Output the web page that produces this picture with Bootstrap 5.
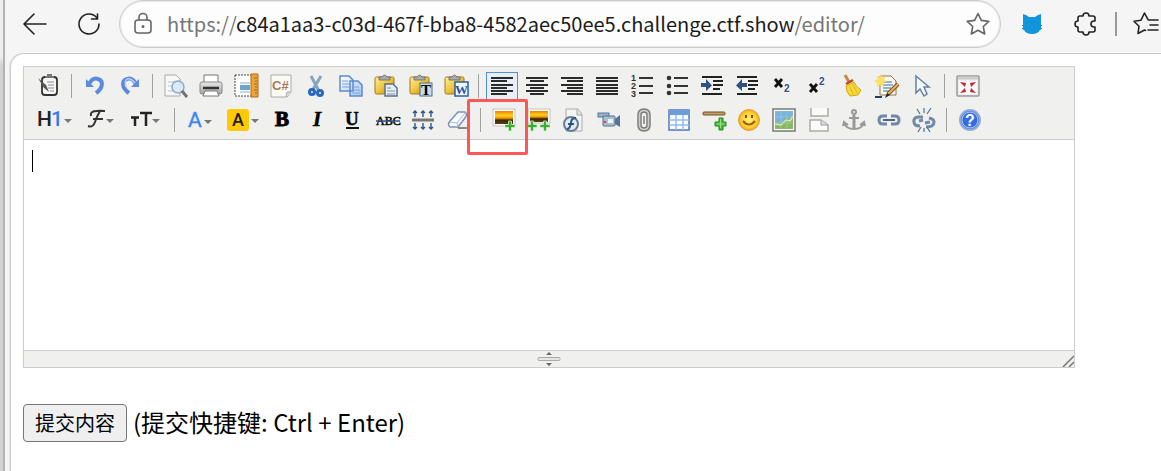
<!DOCTYPE html>
<html lang="zh-CN">
<head>
<meta charset="utf-8">
<meta name="viewport" content="width=device-width, initial-scale=1">
<title>Editor</title>
<link href="https://cdn.jsdelivr.net/npm/bootstrap@5.3.0/dist/css/bootstrap.min.css" rel="stylesheet">
<style>
body{background:#f5f5f5;font-family:"Noto Sans CJK SC",sans-serif;color:#000;overflow:hidden}
.window-edge{width:5px;background:linear-gradient(#eee 0 56px,#d2d2d2 66px);border-right:2px solid #b3b3b3}
.browser-bar{height:48px;padding-left:15px}
.browser-bar button{width:30px;height:48px;padding:0;border:0;background:none;flex:none}
.browser-bar svg,.tool svg{display:block;margin:auto;overflow:visible}
.browser-bar svg{fill:none;stroke:#222;stroke-width:1.6;stroke-linecap:round;stroke-linejoin:round}
.address{height:48px;margin-left:15px;margin-right:-2px;border:1px solid #ccc;box-shadow:inset 0 0 0 1px #e6e6e6;border-radius:24px;background:#fdfdfd;padding:0 7px 0 8px}
.address svg{stroke:#666}
.url{font:20px/46px "Noto Sans CJK SC",sans-serif;color:#767676;margin-left:9px;white-space:nowrap;overflow:hidden}
.url b{font-weight:400;color:#1b1b1b}
.bar-split{width:2px;height:24px;background:#999}
.bar-end{margin-left:14px}
.browser-page{margin:5px 0 0 5px;border:1px solid #ccc;border-right:0;border-bottom:0;border-radius:14px 0 0 0;background:#fff;padding:12px 86px 24px 12px;box-shadow:-1px 0 #e4e4e4}
.editor{border:1px solid #ccc}
.toolbar{background:#f0f0ee;border-bottom:1px solid #ccc;padding:5px 9px;gap:6px}
.tool-row{gap:3px}
.tool{width:32px;height:28px;padding:0;border:0;background:none;flex:none}
.tool.chosen{border:1px solid #5690d2;background:#e9eff6}
.tool-menu{width:43px}.tool-color{width:38px}.tool-mark{width:41px}
.lines{stroke:#2b2b2b;stroke-width:2}
.split{width:8px;height:24px;flex:none}
.split::before{content:"";display:block;width:1px;height:24px;margin-left:3px;background:#a0a0a0}
.highlight-box{left:-21px;top:-7px;width:61px;height:56px;border:3px solid #fc5858;border-radius:2px;pointer-events:none;z-index:2}
.edit-text{display:block;height:210px;border:0;resize:none;outline:0;padding:8px;background:#fff}
.caret{left:8px;top:10px;width:1px;height:22px;background:#000}
.statusbar{height:17px;background:#f0f0ee;border-top:1px solid #ccc}
.corner{right:0;bottom:0}
.submit{height:38px;padding:0 11px;border:1px solid #767676;border-radius:4px;background:#efefef;font-size:20px;line-height:36px;color:#000}
.submit-row{margin-top:36px;gap:6px;font-size:24px;line-height:36px}
</style>
</head>
<body>
<svg width="0" height="0" class="position-absolute" aria-hidden="true">
<defs>
<linearGradient id="sunset" x2="0" y2="1"><stop stop-color="#ee8100"/><stop offset=".35" stop-color="#ffd21e"/><stop offset=".55" stop-color="#f09a00"/><stop offset=".7" stop-color="#3c260a"/><stop offset="1" stop-color="#5a3f12"/></linearGradient>
<linearGradient id="gold" x2="1" y2="1"><stop stop-color="#fff0a0"/><stop offset=".5" stop-color="#efc53c"/><stop offset="1" stop-color="#b67d12"/></linearGradient>
<linearGradient id="silver" x2="0" y2="1"><stop stop-color="#e8e8e8"/><stop offset="1" stop-color="#a5a5a5"/></linearGradient>
<linearGradient id="azure" x2="1" y2="1"><stop stop-color="#fff"/><stop offset="1" stop-color="#a4c4ee"/></linearGradient>
<radialGradient id="smile"><stop stop-color="#fff27c"/><stop offset=".7" stop-color="#ffd22e"/><stop offset="1" stop-color="#eda522"/></radialGradient>
<path id="plus" d="M3.500 0h3v3.500H10v3H6.500V10h-3V6.500H0v-3h3.500z" fill="#3dac32" stroke="#dff3d9" stroke-width=".7"/>
<path id="down" d="M0 0h8L4 4z" fill="#777"/>
<g id="clipboard"><rect x="1" y="3" width="19" height="17" rx="1.500" fill="url(#gold)" stroke="#a17722"/><path d="M5 6V3h3q2.500-4 5 0h3v3z" fill="#aaa" stroke="#666" stroke-width=".8"/></g>
</defs>
</svg>
<div class="d-flex min-vh-100">
<div class="window-edge flex-shrink-0"></div>
<div class="d-flex flex-column flex-grow-1 overflow-hidden">
<header class="browser-bar d-flex align-items-center">
<button aria-label="Back"><svg width="24" height="24"><path d="M23 12H1M11 2 1 12l10 10"/></svg></button>
<button class="ms-4" aria-label="Reload"><svg width="24" height="24"><path d="M20 6a10 10 0 1 0 2 6M20.500 2v5h-6"/></svg></button>
<div class="address d-flex align-items-center flex-grow-1 overflow-hidden">
<button aria-label="Site information"><svg width="20" height="22"><rect x="2" y="7" width="16" height="13" rx="3"/><path d="M6 7V4.500a4 4 0 0 1 8 0V7"/><circle cx="10" cy="13.500" r=".7" fill="#666"/></svg></button>
<div class="url flex-grow-1">https://<b>c84a1aa3-c03d-467f-bba8-4582aec50ee5.challenge.ctf.show</b>/editor/</div>
<button aria-label="Favourite"><svg width="24" height="24"><path d="m12 1.500 3.300 6.900 7.500 1-5.500 5.100 1.400 7.500-6.700-3.700L5.300 22l1.400-7.500-5.500-5.100 7.500-1z"/></svg></button>
</div>
<button class="ms-3 ps-1" aria-label="Extension"><svg width="22" height="22"><path d="M2 1q4 1 6 3h6q2-2 6-3v11h1v1h-1v2h1v1l-2 1q-2 4-8 4t-8-4l-2-1v-1h1v-2H1v-1h1z" fill="#1296db" stroke="none"/></svg></button>
<button class="ms-4 ps-1" aria-label="Extensions"><svg width="24" height="24"><path d="M6 4h3q0-3 3-3t3 3h4q2 0 2 2v3h-1q-3 0-3 3t3 3h1v3q0 2-2 2h-4q0 3-3 3t-3-3H6q-2 0-2-2v-3q-3 0-3-3t3-3V6q0-2 2-2z"/></svg></button>
<div class="bar-split ms-3"></div>
<button class="bar-end" aria-label="Favourites"><svg width="26" height="24"><path d="m16 8-1-.3L11.500 1 8 8.200l-7 1 5 5-1 7.300 6.500-3.500 1 .5M16 8h9M17 13h8M15 18h10"/></svg></button>
</header>
<main class="browser-page flex-grow-1">
<div class="editor">
<div class="toolbar d-flex flex-column" role="toolbar">
<div class="tool-row d-flex align-items-center">
<button class="tool" aria-label="Source"><svg width="24" height="24"><rect x="5" y="3" width="15" height="18" rx="3" fill="#f6f6f2" stroke="#333" stroke-width="1.800"/><path d="M8 4V2h2V0h5v2h2v2z" fill="#777"/><path d="M10 8h7M11 11h6M11 14h6M13 17h4" stroke="#889"/><path d="m1 4 8 7 3 7-5-4z" fill="#555"/></svg></button>
<div class="split"></div>
<button class="tool" aria-label="Undo"><svg width="24" height="24"><path d="M6 10q4-7 9-5c6 2 5 9-2 14" fill="none" stroke="#5b8ade" stroke-width="4"/><path d="M3 5v8h8z" fill="#5b8ade"/></svg></button>
<button class="tool" aria-label="Redo"><svg width="24" height="24"><path d="M18 10q-4-7-9-5c-6 2-5 9 2 14" fill="none" stroke="#5b8ade" stroke-width="4"/><path d="M21 5v8h-8z" fill="#5b8ade"/><path d="M17 9q-4-5-8-4-3 2-1 8" fill="none" stroke="#b9d0f6" stroke-width="1.500"/></svg></button>
<div class="split"></div>
<button class="tool" aria-label="Preview"><svg width="24" height="24"><path d="M1 1h11l4 4v17H1z" fill="#f8f8f7" stroke="#aaa"/><path d="M4 8h7M4 12h5M4 17h8" stroke="#adc4d8"/><circle cx="14" cy="13" r="6" fill="#d7e9fa" fill-opacity=".9" stroke="#8babc9" stroke-width="1.500"/><path d="m18 17 5 6" stroke="#747171" stroke-width="3"/></svg></button>
<button class="tool" aria-label="Print"><svg width="24" height="24"><path d="M5 9V1h14v8" fill="#fff" stroke="#777"/><rect x="1" y="8" width="22" height="12" rx="2" fill="url(#silver)" stroke="#888"/><path d="M4 14h16" stroke="#333" stroke-width="2.500"/><path d="M6 17h12l2 5H4z" fill="#fff" stroke="#777"/></svg></button>
<button class="tool" aria-label="Template"><svg width="24" height="24"><path d="M1 1h19v21H1z" fill="#fff" stroke="#444" stroke-dasharray="2 1"/><path d="M6 9h10M6 18h10" stroke="#c1d7e7" stroke-width="2"/><path d="M6 11h10v5H6z" fill="#6aa5d2"/><path d="M17 0h7v23h-7z" fill="#eba637" stroke="#b6690c"/><path d="M20 4h3M21 7h2M20 10h3M21 13h2M20 16h3M21 19h2" stroke="#a0691e"/></svg></button>
<button class="tool" aria-label="Code"><svg width="24" height="24"><path d="M2 1h20v17l-4 5H2z" fill="#fafaf7" stroke="#aaa"/><path d="m17 23 1-5h4" fill="#ddd" stroke="#aaa"/><text x="3" y="16" font-family="Liberation Sans" font-weight="700" font-size="13" fill="#a87a52">C#</text></svg></button>
<button class="tool" aria-label="Cut"><svg width="24" height="24"><path d="m7 2 8 15M17 2 8 17" stroke="#88a3bb" stroke-width="3"/><g fill="none" stroke="#2867bd" stroke-width="3"><circle cx="8" cy="18" r="2.500"/><circle cx="16" cy="19" r="2.500"/></g></svg></button>
<button class="tool" aria-label="Copy"><svg width="24" height="24"><path d="M1 2h9l4 4v11H1zM11 7h8l4 4v11H11z" fill="url(#azure)" stroke="#5d89cb" stroke-width="1.500"/><path d="M3 7h6M3 10h7M3 13h7M13 13h7M13 16h8M13 19h8" stroke="#79a4df"/></svg></button>
<button class="tool" aria-label="Paste"><svg width="24" height="24"><use href="#clipboard"/><path d="M11 10h8l4 4v8H11z" fill="#e7edf1" stroke="#58738d" stroke-width="1.500"/><path d="M13 14h4M13 17h8M13 20h8" stroke="#7d99b4"/></svg></button>
<button class="tool" aria-label="Paste text"><svg width="24" height="24"><use href="#clipboard"/><rect x="11" y="9" width="12" height="13" fill="#c7dceb" stroke="#536c82"/><text x="12" y="21" font-family="Liberation Serif" font-weight="700" font-size="15">T</text></svg></button>
<button class="tool" aria-label="Paste from Word"><svg width="24" height="24"><use href="#clipboard"/><rect x="11" y="8" width="13" height="14" fill="#f5f9ff" stroke="#285dab" stroke-width="1.500"/><text x="11" y="20" font-family="Liberation Serif" font-weight="700" font-size="13" fill="#2057a7">W</text></svg></button>
<div class="split"></div>
<button class="tool chosen" aria-label="Align left"><svg class="lines" width="24" height="24"><path d="M1 4h22M1 7h16M1 11h22M1 14h16M1 17h22M1 20h16"/></svg></button>
<button class="tool" aria-label="Align center"><svg class="lines" width="24" height="24"><path d="M1 4h22M5 7h14M1 11h22M5 14h14M1 17h22M5 20h14"/></svg></button>
<button class="tool" aria-label="Align right"><svg class="lines" width="24" height="24"><path d="M1 4h22M7 7h16M1 11h22M7 14h16M1 17h22M7 20h16"/></svg></button>
<button class="tool" aria-label="Justify"><svg class="lines" width="24" height="24"><path d="M1 4h22M1 7h22M1 11h22M1 14h22M1 17h22M1 20h22"/></svg></button>
<button class="tool" aria-label="Numbered list"><svg width="24" height="24"><path d="M9 4h14M9 12h14M9 19h14" stroke="#333" stroke-width="2"/><g font-family="Liberation Sans" font-weight="700" font-size="9" fill="#333"><text x="1" y="7">1</text><text x="1" y="15">2</text><text x="1" y="23">3</text></g></svg></button>
<button class="tool" aria-label="Bulleted list"><svg width="24" height="24"><path d="M9 4h14M9 12h14M9 19h14" stroke="#333" stroke-width="2"/><g fill="#333"><circle cx="4" cy="4" r="2.300"/><circle cx="4" cy="12" r="2.300"/><circle cx="4" cy="19" r="2.300"/></g></svg></button>
<button class="tool" aria-label="Indent"><svg width="24" height="24"><path d="M2 3h20M13 7h10M13 11h10M13 15h7M2 20h20" stroke="#222" stroke-width="2"/><path d="M1 9h5V5l6 6.500L6 17v-4H1z" fill="#315384"/></svg></button>
<button class="tool" aria-label="Outdent"><svg width="24" height="24"><path d="M2 3h20M13 7h10M13 11h10M13 15h7M2 20h20" stroke="#222" stroke-width="2"/><path d="M12 9H7V5l-6 6.500L7 17v-4h5z" fill="#315384"/></svg></button>
<button class="tool" aria-label="Subscript"><svg width="24" height="24"><path d="m5 5 7 8m0-8-7 8" stroke="#111" stroke-width="2.800"/><text x="14" y="18" font-family="Liberation Sans" font-weight="700" font-size="10" fill="#315384">2</text></svg></button>
<button class="tool" aria-label="Superscript"><svg width="24" height="24"><path d="m5 10 7 8m0-8-7 8" stroke="#111" stroke-width="2.800"/><text x="14" y="11" font-family="Liberation Sans" font-weight="700" font-size="10" fill="#315384">2</text></svg></button>
<button class="tool" aria-label="Clear formatting"><svg width="24" height="24"><path d="m5 1 4 7" stroke="#c08a45" stroke-width="3"/><path d="m6 12 8-4q2 5 7 8l-3 5-8 1q-4-4-4-10z" fill="#f5d638" stroke="#d3aa1c"/><path d="m6 10 7-4" stroke="#b84924" stroke-width="2.500"/><path d="m10 13 3 7m0-10 4 9" stroke="#e2b920"/></svg></button>
<button class="tool" aria-label="Quick format"><svg width="24" height="24"><path d="M5 2h11l5 5v14H5z" fill="#fbfaf2" stroke="#8c764d"/><path d="M8 8h9M8 11h10M8 14h8M8 17h7" stroke="#749bc5" stroke-width="1.500"/><path d="m6 0 1 4 4-2-2 4 3 1-4 2 1 4-4-2-3 2V9L-1 7l4-2-2-3 4 1z" fill="#ffdf62"/><path d="m13 20 10-10" stroke="#805222" stroke-width="4"/><path d="m13 20 10-10" stroke="#edb455" stroke-width="2"/><path d="M0 23h7" stroke="#233d68" stroke-width="2"/><path d="m10 24 2-5 3 2z" fill="#222"/></svg></button>
<button class="tool" aria-label="Select all"><svg width="24" height="24"><path d="M6 2v17l4-4 4 7 3-2-3-7h5z" fill="#f4f8fc" stroke="#6580a1" stroke-width="1.500"/></svg></button>
<div class="split"></div>
<button class="tool" aria-label="Fullscreen"><svg width="24" height="24"><rect x="1" y="2" width="22" height="20" rx="1" fill="#eee" stroke="#999" stroke-width="1.500"/><path d="M2 4h20" stroke="#ccc" stroke-width="3"/><path d="M3 7h18v13H3z" fill="#fafafa"/><path d="m4 8 6 1-1 4zM20 8l-6 1 1 4zM4 19l6-1-1-4zM20 19l-6-1 1-4z" fill="#c32530"/></svg></button>
</div>
<div class="tool-row d-flex align-items-center">
<button class="tool tool-menu" aria-label="Heading"><svg width="35" height="24"><text x="0" y="18" font-family="Roboto" font-weight="500" font-size="21" fill="#222">H</text><text x="14" y="18" font-family="Roboto" font-weight="500" font-size="21" fill="#3b78e7">1</text><use href="#down" x="27" y="11"/></svg></button>
<button class="tool tool-menu" aria-label="Font"><svg width="35" height="24"><path d="M8 5Q11 2 22 3M17 3q-3 5-5 11-2 6-7 4M10 11h10M12 3Q7 4 8 8" fill="none" stroke="#333" stroke-width="2"/><use href="#down" x="23" y="11"/></svg></button>
<button class="tool tool-menu" aria-label="Font size"><svg width="35" height="24"><path d="M2 9.500h8M6 9v9M11 5h12M17 4v14" fill="none" stroke="#222" stroke-width="2.500"/><use href="#down" x="23" y="11"/></svg></button>
<div class="split"></div>
<button class="tool tool-color" aria-label="Text color"><svg width="30" height="24"><text x="2" y="19" font-family="Roboto" font-size="21" fill="#3f83f8" stroke="#3f83f8" stroke-width=".4">A</text><use href="#down" x="18" y="12"/></svg></button>
<button class="tool tool-mark" aria-label="Highlight color"><svg width="33" height="24"><rect width="22" height="22" x="0" y="1" rx="3" fill="#ffca05"/><text x="5" y="18" font-family="Roboto" font-weight="500" font-size="18" fill="#222">A</text><use href="#down" x="24" y="11"/></svg></button>
<button class="tool" aria-label="Bold"><svg width="24" height="24"><text x="4" y="18" font-family="Liberation Serif" font-weight="700" font-size="21" stroke="#000" stroke-width="1">B</text></svg></button>
<button class="tool" aria-label="Italic"><svg width="24" height="24"><text x="7" y="18" font-family="Liberation Serif" font-style="italic" font-weight="700" font-size="21" stroke="#000" stroke-width=".5">I</text></svg></button>
<button class="tool" aria-label="Underline"><svg width="24" height="24"><text x="4" y="17" font-family="Liberation Serif" font-weight="700" font-size="19" stroke="#000" stroke-width=".5">U</text><path d="M5 20h13" stroke="#111" stroke-width="2"/></svg></button>
<button class="tool" aria-label="Strikethrough"><svg width="24" height="24"><text x="0" y="17" font-family="Liberation Serif" font-size="12" stroke="#111" stroke-width=".6">ABC</text><path d="M0 13h24" stroke="#315384" stroke-width="1.500"/></svg></button>
<button class="tool" aria-label="Line height"><svg width="24" height="24"><path d="M1 12h22" stroke="#777" stroke-width="3"/><path d="M4 9V3m8 6V3m8 6V3M4 15v6m8-6v6m8-6v6M2 5l2-2 2 2m4 0 2-2 2 2m4 0 2-2 2 2M2 19l2 2 2-2m4 0 2 2 2-2m4 0 2 2 2-2" fill="none" stroke="#315384" stroke-width="1.400"/></svg></button>
<button class="tool" aria-label="Remove format"><svg width="24" height="24"><path d="M12 4h7q3 2 0 6l-7 9H4q-3-2 0-6z" fill="#f6f8fc" stroke="#7893b9" stroke-width="1.500"/><path d="m4 14 7 1 8-10m-8 10 1 4" fill="none" stroke="#adc0da"/><path d="M12 20h10" stroke="#222"/></svg></button>
<div class="split"></div>
<div class="position-relative">
<button class="tool d-block" aria-label="Image"><svg width="24" height="24"><rect x="1" y="1" width="22" height="17" fill="#fff" stroke="#c3c3c3"/><path d="M3 3h18v13H3z" fill="url(#sunset)"/><use href="#plus" x="13" y="13"/></svg></button>
<div class="highlight-box position-absolute"></div>
</div>
<button class="tool" aria-label="Multiple images"><svg width="24" height="24"><rect x="1" y="1" width="22" height="14" fill="#fff" stroke="#c3c3c3"/><path d="M3 3h18v11H3z" fill="url(#sunset)"/><use href="#plus" x="0" y="13"/><use href="#plus" x="13" y="13"/></svg></button>
<button class="tool" aria-label="Flash"><svg width="24" height="24"><path d="M4 1h12l4 5v17H4z" fill="#f4f4f4" stroke="#aaa"/><path d="M15 1v6h5" fill="#ddd" stroke="#aaa"/><circle cx="9" cy="16" r="7" fill="#e1ebf4" stroke="#667e94" stroke-width="2"/><path d="M14 10q-5 0-5 5-1 6-4 6M6 16h6" fill="none" stroke="#2b557c" stroke-width="2"/></svg></button>
<button class="tool" aria-label="Media"><svg width="24" height="24"><rect x="1" y="5" width="11" height="4" fill="#9bb4ce" stroke="#587797"/><rect x="6" y="8" width="12" height="10" rx="1" fill="#a9c1d8" stroke="#53708b"/><path d="m18 11 5-4v12l-5-3z" fill="#557493"/><circle cx="8" cy="14" r="1.300" fill="#e54935"/><path d="M11 13h5" stroke="#eef5ff" stroke-width="4"/></svg></button>
<button class="tool" aria-label="Attachment"><svg width="24" height="24"><path d="M7.500 6v11q0 5 4.500 5t4.500-5V7q0-5-4.500-5T7.500 7" fill="none" stroke="#ccc" stroke-width="2"/><path d="M9 7v10q0 3 3 3t3-3V7q0-3-3-3T9 7M12 8v8M6 8v9q0 6 6 6t6-6V7q0-6-6-6T6 7v10" fill="none" stroke="#777" stroke-width="1.400"/></svg></button>
<button class="tool" aria-label="Table"><svg width="24" height="24"><rect x="2" y="2" width="20" height="20" fill="#f7fbff" stroke="#4e79b9" stroke-width="1.500"/><path d="M2 2h20v5H2z" fill="#6d9cdb"/><path d="M9 7v15m7-15v15M2 12h20M2 17h20" stroke="#9bbce7" stroke-width="1.500"/></svg></button>
<button class="tool" aria-label="Horizontal rule"><svg width="24" height="24"><rect x="1" y="4" width="22" height="3" rx="1" fill="#c59d67" stroke="#735126"/><path d="M17 10h4v4h3v4h-3v4h-4v-4h-4v-4h4z" fill="#48bd3a" stroke="#25861e"/><path d="M18.500 11v9m-4-4h8" stroke="#92e37f"/></svg></button>
<button class="tool" aria-label="Emoticons"><svg width="24" height="24"><circle cx="12" cy="12" r="10.500" fill="url(#smile)" stroke="#e2a437"/><path d="M9 7v3m6-3v3" stroke="#7b4e11" stroke-width="2"/><path d="M6 13q6 7 12 0" fill="none" stroke="#a55c18" stroke-width="2"/></svg></button>
<button class="tool" aria-label="Map"><svg width="24" height="24"><rect x="1" y="1" width="22" height="22" fill="#fff" stroke="#777" stroke-width="1.500"/><path d="M3 3h18v18H3z" fill="#79b4e0"/><path d="m3 14 6 1 5-5 4 1 3-5v15H3z" fill="#87b85a"/><path d="m3 16 6 1 5-5 4 1 3-5" fill="none" stroke="#d7e9bd" stroke-width="1.500"/><path d="M9 3v18m6-18v18M3 9h18M3 15h18" stroke="#a5c7cb" stroke-width=".7"/></svg></button>
<button class="tool" aria-label="Page break"><svg width="24" height="24"><path d="M4 0v8h17V0M3 23V12h11l7 5v6z" fill="#fafafa" stroke="#aaa" stroke-width="1.500"/><path d="M14 12v5h7" fill="#ddd" stroke="#999"/></svg></button>
<button class="tool" aria-label="Anchor"><svg width="24" height="24"><g fill="none" stroke="#999" stroke-width="2"><circle cx="12" cy="4" r="2"/><path d="M7 10h10M2 15q2 6 10 6t10-6M1 18l1-4 4 3m17 1-1-4-4 3"/><path d="M12 7v14" stroke-width="3"/></g></svg></button>
<button class="tool" aria-label="Link"><svg width="24" height="24"><g fill="none" stroke="#6f89a7" stroke-width="3"><path d="M10 8H6q-4 0-4 4t4 4h4M14 8h4q4 0 4 4t-4 4h-4"/></g><path d="M6 12h12" stroke="#48647f" stroke-width="2"/></svg></button>
<button class="tool" aria-label="Unlink"><svg width="24" height="24"><g fill="none" stroke="#6f89a7" stroke-width="3"><path d="M11 9H6q-5 1-4 5 0 4 6 4M14 19q8 0 8-5 0-3-5-4M7 13l4-1m2 3 5-1"/></g><path d="m5 1 3 5m4-6v5m7-5-4 6M9 19l-3 5m6-4v4m3-5 3 5" stroke="#5d7893" stroke-width="1.300"/></svg></button>
<div class="split"></div>
<button class="tool" aria-label="About"><svg width="24" height="24"><circle cx="12" cy="12" r="10" fill="#356de0" stroke="#91acd9" stroke-width="2"/><circle cx="12" cy="12" r="8" fill="none" stroke="#b5cbf9"/><text x="7" y="18" font-family="Liberation Sans" font-weight="700" font-size="16" fill="#fff">?</text></svg></button>
</div>
</div>
<div class="position-relative"><textarea class="edit-text w-100" aria-label="Editor content"></textarea><div class="caret position-absolute"></div></div>
<div class="statusbar position-relative d-flex justify-content-center align-items-center">
<svg width="24" height="16"><path d="m9 4 3-3 3 3zM9 12h6l-3 3z" fill="#666"/><rect x="1" y="6.500" width="22" height="3" rx="1" fill="#e5e5e2" stroke="#aaa"/></svg>
<svg class="corner position-absolute" width="12" height="12"><path d="M1 12 12 1M7 12l5-5" stroke="#777" stroke-width="1.500"/></svg>
</div>
</div>
<div class="submit-row d-flex align-items-start"><button class="submit">提交内容</button><span>(提交快捷键: Ctrl + Enter)</span></div>
</main>
</div>
</div>
<script src="https://cdn.jsdelivr.net/npm/bootstrap@5.3.0/dist/js/bootstrap.bundle.min.js"></script>
</body>
</html>
